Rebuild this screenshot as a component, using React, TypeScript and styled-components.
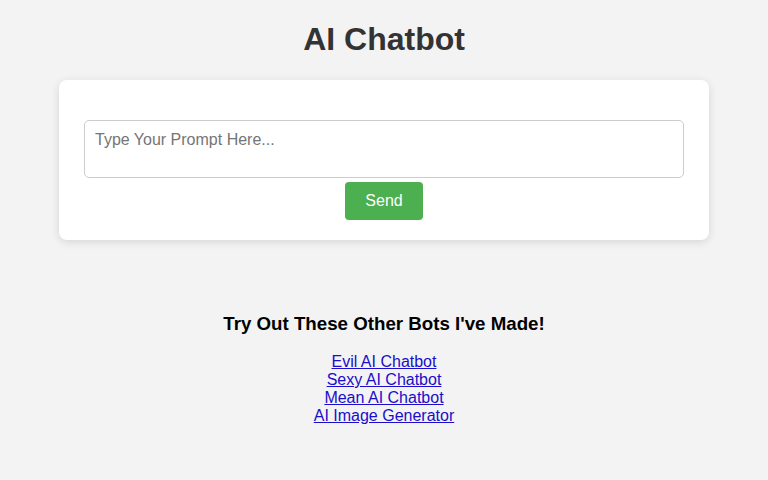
import styled, { createGlobalStyle } from "styled-components";

const GlobalStyle = createGlobalStyle`
  html, body {
    margin: 0;
    padding: 0;
    background: #f3f3f3;
    font-family: "Liberation Sans", Arial, sans-serif;
  }
`;

const links = [
  "Evil AI Chatbot",
  "Sexy AI Chatbot",
  "Mean AI Chatbot",
  "AI Image Generator",
];

const App = () => {
  return (
    <Page>
      <GlobalStyle />
      <Title>AI Chatbot</Title>
      <ChatCard>
        <PromptInput placeholder="Type Your Prompt Here..." />
        <SendButton type="button">Send</SendButton>
      </ChatCard>
      <OtherBots>
        <OtherTitle>Try Out These Other Bots I've Made!</OtherTitle>
        <LinkList>
          {links.map((item) => (
            <BotLink key={item} href="#">
              {item}
            </BotLink>
          ))}
        </LinkList>
      </OtherBots>
    </Page>
  );
};

const Page = styled.div`
  min-height: 480px;
  display: flex;
  flex-direction: column;
  align-items: center;
  overflow: hidden;
`;

const Title = styled.h1`
  margin: 21px 0 22px;
  font-size: 32px;
  font-weight: 700;
  line-height: 37px;
  color: #333333;
`;

const ChatCard = styled.div`
  width: 600px;
  padding: 40px 25px 20px;
  background: #ffffff;
  border-radius: 8px;
  box-shadow: 0 2px 8px rgba(0, 0, 0, 0.12);
  display: flex;
  flex-direction: column;
  align-items: center;
  gap: 4px;
`;

const PromptInput = styled.textarea`
  box-sizing: border-box;
  width: 600px;
  height: 58px;
  padding: 10px;
  border: 1px solid #cccccc;
  border-radius: 5px;
  font-family: "Liberation Sans", Arial, sans-serif;
  font-size: 16px;
  resize: none;
  outline: none;

  &::placeholder {
    color: #757575;
  }
`;

const SendButton = styled.button`
  height: 38px;
  padding: 0 20px;
  border: none;
  border-radius: 4px;
  background: #4caf50;
  color: #ffffff;
  font-family: "Liberation Sans", Arial, sans-serif;
  font-size: 16px;
  cursor: pointer;
`;

const OtherBots = styled.div`
  margin-top: 73px;
  display: flex;
  flex-direction: column;
  align-items: center;
`;

const OtherTitle = styled.h3`
  margin: 0 0 18px;
  font-size: 18.72px;
  font-weight: 700;
  line-height: 22px;
  color: #000000;
`;

const LinkList = styled.div`
  display: flex;
  flex-direction: column;
  align-items: center;
`;

const BotLink = styled.a`
  font-size: 16px;
  line-height: 18px;
  color: #1a0dcc;
  text-decoration: underline;
`;

export default App;
